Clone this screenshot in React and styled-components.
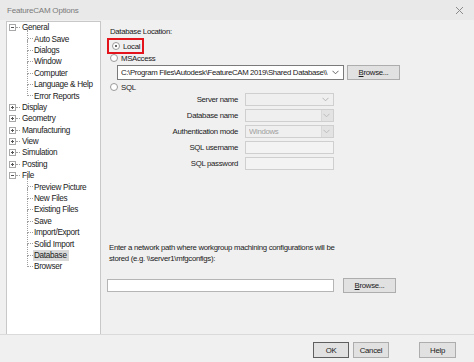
import React from 'react';
import styled, { createGlobalStyle } from 'styled-components';

const Global = createGlobalStyle`
  html, body { margin: 0; padding: 0; background: #ffffff; }
  body {
    font-family: "Liberation Sans", Arial, sans-serif;
    font-size: 8.2px;
    letter-spacing: -0.3px;
    color: #1a1a1a;
  }
`;

const Window = styled.div`
  width: 474px;
  height: 362px;
  background: #f0f0f0;
  display: flex;
  flex-direction: column;
  overflow: hidden;
`;

const TitleBar = styled.div`
  height: 20px;
  background: #e9e9e9;
  display: flex;
  align-items: center;
  justify-content: space-between;
  padding: 0 10px 0 7px;
  color: #7a7a7a;
  font-size: 8px;
  letter-spacing: -0.2px;
`;

const Body = styled.div`
  display: flex;
  padding: 1px 4px 0 6px;
  height: 313px;
  border-bottom: 1px solid #dadada;
`;

const TreePanel = styled.div`
  width: 93px;
  background: #ffffff;
  border: 1px solid #c8c8c8;
  border-bottom: none;
`;

const TreeRow = styled.div`
  height: 11.4px;
  display: flex;
  align-items: center;
  position: relative;
  padding-left: ${p => (p.child ? 26 : 14)}px;
  white-space: nowrap;
`;

const Expander = styled.span`
  position: absolute;
  left: 2px;
  top: 2px;
  width: 7px;
  height: 7px;
  border: 1px solid #a8a8a8;
  box-sizing: border-box;
  &::before {
    content: '';
    position: absolute;
    left: 1px;
    top: 2px;
    width: 3px;
    height: 1px;
    background: #555;
  }
  &::after {
    content: '';
    display: ${p => (p.open ? 'none' : 'block')};
    position: absolute;
    left: 2px;
    top: 1px;
    width: 1px;
    height: 3px;
    background: #555;
  }
`;

const Stub = styled.span`
  position: absolute;
  left: 9px;
  top: 5px;
  width: 4px;
  border-top: 1px dotted #a0a0a0;
`;

const Branch = styled.span`
  position: absolute;
  left: 20px;
  top: ${p => (p.first ? -3 : -6)}px;
  height: ${p => (p.last ? (p.first ? 9 : 12) : 12)}px;
  border-left: 1px dotted #a0a0a0;
  &::after {
    content: '';
    position: absolute;
    left: 0;
    top: ${p => (p.first ? 8 : 11)}px;
    width: 5px;
    border-top: 1px dotted #a0a0a0;
  }
`;

const Label = styled.span`
  padding: 0 2px 0 1px;
  line-height: 11px;
  background: ${p => (p.selected ? '#d9d9d9' : 'transparent')};
`;

const Content = styled.div`
  flex: 1;
  padding: 5px 0 0 7px;
  display: flex;
  flex-direction: column;
  font-size: 7.8px;
`;

const Caption = styled.div`
  height: 12px;
  line-height: 12px;
  margin-left: 2px;
`;

const RadioRow = styled.label`
  display: flex;
  align-items: center;
  gap: 3px;
  height: 10px;
  margin-left: 2px;
`;

const RadioDot = styled.span`
  width: 8px;
  height: 8px;
  border-radius: 50%;
  border: 1px solid #9a9a9a;
  background: #fff;
  box-sizing: border-box;
  position: relative;
  &::after {
    content: '';
    display: ${p => (p.checked ? 'block' : 'none')};
    position: absolute;
    left: 2px;
    top: 2px;
    width: 2px;
    height: 2px;
    border-radius: 50%;
    background: #333;
  }
`;

const Highlight = styled.div`
  align-self: flex-start;
  border: 2px solid #e3141c;
  padding: 1px 2px 1px 1px;
  margin: 0 0 0 -1px;
`;

const Line = styled.div`
  display: flex;
  align-items: center;
  gap: ${p => p.gap || 9}px;
  margin: ${p => p.m || '0'};
`;

const Combo = styled.div`
  width: ${p => p.w}px;
  height: ${p => p.h || 15}px;
  box-sizing: border-box;
  border: 1px solid ${p => (p.disabled ? '#cfcfcf' : '#7a7a7a')};
  background: ${p => (p.disabled ? '#efefef' : '#ffffff')};
  display: flex;
  align-items: center;
  padding-left: 3px;
  color: ${p => (p.disabled ? '#a0a0a0' : '#1a1a1a')};
  overflow: hidden;
  white-space: nowrap;
`;

const ComboText = styled.span`
  flex: 1;
  min-width: 0;
  overflow: hidden;
  letter-spacing: -0.34px;
`;

const Chevron = styled.svg`
  width: 7px;
  height: 5px;
  margin: 0 4px 0 1px;
  flex: none;
`;

const DropBtn = styled.span`
  width: 11px;
  align-self: stretch;
  background: #e3e3e3;
  border-left: 1px solid #d8d8d8;
  display: flex;
  align-items: center;
  justify-content: center;
  flex: none;
`;

const Field = styled.div`
  width: ${p => p.w}px;
  height: ${p => p.h || 13}px;
  box-sizing: border-box;
  border: 1px solid ${p => p.c || '#cfcfcf'};
  background: ${p => p.bg || '#ffffff'};
`;

const Button = styled.button`
  width: ${p => p.w || 52}px;
  height: ${p => p.h || 15}px;
  box-sizing: border-box;
  border: 1px solid ${p => (p.primary ? '#5f5f5f' : '#adadad')};
  background: #e1e1e1;
  font-family: inherit;
  font-size: 7.8px;
  letter-spacing: -0.3px;
  color: #1a1a1a;
  padding: 0;
  display: flex;
  align-items: center;
  justify-content: center;
`;

const SqlGrid = styled.div`
  display: grid;
  grid-template-columns: 130px 90px;
  column-gap: 7px;
  row-gap: 3px;
  margin: 1px 0 0 0;
  align-items: center;
`;

const SqlLabel = styled.div`
  text-align: right;
  height: 13px;
  line-height: 13px;
`;

const Note = styled.div`
  margin: 0 0 0 1px;
  line-height: 10.5px;
`;

const Footer = styled.div`
  flex: 1;
  display: flex;
  align-items: flex-start;
  padding: 7px 0 0 313px;
  gap: 4px;
`;

const Spacer = styled.div`
  width: 22px;
`;

const ChevronDown = ({ color = '#555' }) => (
  <Chevron viewBox="0 0 7 5">
    <path d="M0.5 0.8 L3.5 3.8 L6.5 0.8" fill="none" stroke={color} strokeWidth="0.9" />
  </Chevron>
);

const tree = [
  { label: 'General', open: true, children: ['Auto Save', 'Dialogs', 'Window', 'Computer', 'Language & Help', 'Error Reports'] },
  { label: 'Display' },
  { label: 'Geometry' },
  { label: 'Manufacturing' },
  { label: 'View' },
  { label: 'Simulation' },
  { label: 'Posting' },
  { label: 'File', open: true, children: ['Preview Picture', 'New Files', 'Existing Files', 'Save', 'Import/Export', 'Solid Import', 'Database', 'Browser'] },
];

function Tree() {
  return (
    <TreePanel>
      {tree.map(node => (
        <React.Fragment key={node.label}>
          <TreeRow>
            <Expander open={node.open} />
            <Stub />
            <Label>{node.label}</Label>
          </TreeRow>
          {(node.children || []).map((c, i, arr) => (
            <TreeRow child key={c}>
              <Branch first={i === 0} last={i === arr.length - 1} />
              <Label selected={c === 'Database'}>{c}</Label>
            </TreeRow>
          ))}
        </React.Fragment>
      ))}
    </TreePanel>
  );
}

export default function App() {
  return (
    <Window>
      <Global />
      <TitleBar>
        <span>FeatureCAM Options</span>
        <svg width="9" height="9" viewBox="0 0 9 9">
          <path d="M1 1 L8 8 M8 1 L1 8" stroke="#8a8a8a" strokeWidth="1" />
        </svg>
      </TitleBar>
      <Body>
        <Tree />
        <Content>
          <Caption>Database Location:</Caption>
          <Highlight>
            <RadioRow>
              <RadioDot checked />
              Local
            </RadioRow>
          </Highlight>
          <RadioRow style={{ marginTop: -1 }}>
            <RadioDot />
            MSAccess
          </RadioRow>
          <Line gap={3} m="2px 0 0 9px">
            <Combo w={227}>
              <ComboText>C:\Program Files\Autodesk\FeatureCAM 2019\Shared Database\\</ComboText>
              <ChevronDown />
            </Combo>
            <Button w={53} h={15}><u>B</u>rowse...</Button>
          </Line>
          <RadioRow style={{ marginTop: 2 }}>
            <RadioDot />
            SQL
          </RadioRow>
          <SqlGrid>
            <SqlLabel>Server name</SqlLabel>
            <Combo w={89} h={13} disabled>
              <ComboText />
              <ChevronDown color="#b0b0b0" />
            </Combo>
            <SqlLabel>Database name</SqlLabel>
            <Combo w={89} h={13} disabled>
              <ComboText />
              <DropBtn><ChevronDown color="#b8b8b8" /></DropBtn>
            </Combo>
            <SqlLabel>Authentication mode</SqlLabel>
            <Combo w={89} h={13} disabled>
              <ComboText>Windows</ComboText>
              <DropBtn><ChevronDown color="#b8b8b8" /></DropBtn>
            </Combo>
            <SqlLabel>SQL username</SqlLabel>
            <Field w={89} bg="#f3f3f3" />
            <SqlLabel>SQL password</SqlLabel>
            <Field w={89} bg="#f3f3f3" />
          </SqlGrid>
          <Note style={{ marginTop: 73 }}>
            Enter a network path where workgroup machining configurations will be<br />
            stored (e.g. \\server1\mfgconfigs):
          </Note>
          <Line gap={9} m="14px 0 0 -1px">
            <Field w={227} h={13} c="#b5b5b5" />
            <Button w={53} h={15}><u>B</u>rowse...</Button>
          </Line>
        </Content>
      </Body>
      <Footer>
        <Button primary w={36} h={16}>OK</Button>
        <Button w={36} h={16}>Cancel</Button>
        <Spacer />
        <Button w={37} h={16}>Help</Button>
      </Footer>
    </Window>
  );
}
